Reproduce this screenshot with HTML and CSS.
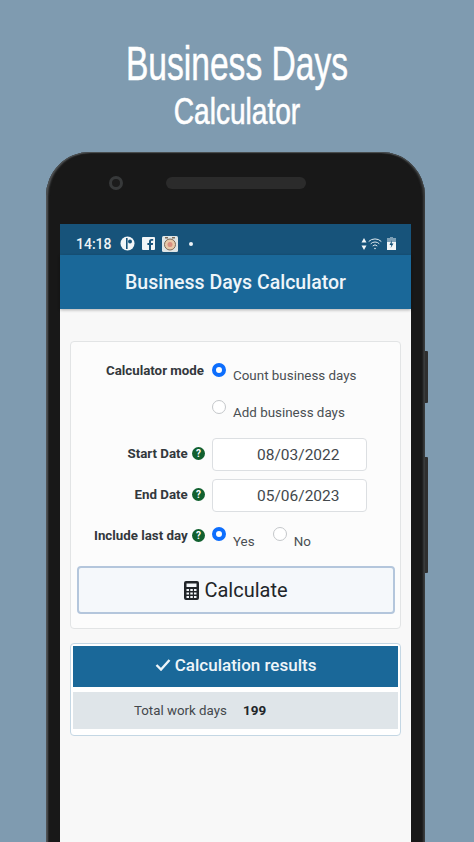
FILE: index.html
```html
<!DOCTYPE html>
<html lang="en">
<head>
<meta charset="utf-8">
<title>Business Days Calculator</title>
<link rel="stylesheet" href="styles.css">
</head>
<body>
<header class="promo">
  <h1 class="promo-title">Business Days</h1>
  <p class="promo-sub">Calculator</p>
</header>
<div class="phone">
  <span class="side-btn side-power"></span>
  <span class="side-btn side-volume"></span>
  <div class="bezel">
    <span class="camera"></span>
    <span class="speaker"></span>
  </div>
  <div class="screen">
    <div class="statusbar">
      <span class="clock">14:18</span>
      <svg class="st-icon" width="15" height="15" viewBox="0 0 15 15"><circle cx="7.5" cy="7.5" r="7" fill="#f2f6f8"/><rect x="6" y="2" width="1.6" height="11" fill="#17537a"/><circle cx="10" cy="5.5" r="2" fill="#17537a"/></svg>
      <svg class="st-icon" width="13" height="13" viewBox="0 0 13 13"><rect width="13" height="13" rx="1" fill="#f2f6f8"/><path d="M9 13V8h1.8l.3-2H9V4.8c0-.6.3-1 1-1h1.200V2h-1.700C7.900 2 7 3 7 4.600V6H5.400v2H7v5z" fill="#17537a"/></svg>
      <svg class="st-icon" width="16" height="16" viewBox="0 0 16 16"><rect width="16" height="16" rx="1.500" fill="#dfe6e6"/><circle cx="8" cy="8.500" r="5.500" fill="#e8c9a8" stroke="#7d6a58" stroke-width="1"/><circle cx="8" cy="8.500" r="2.500" fill="#d98f80"/><rect x="3" y="1" width="3" height="1.500" fill="#7d6a58"/><rect x="10" y="1" width="3" height="1.500" fill="#7d6a58"/></svg>
      <span class="st-dot"></span>
      <span class="st-right">
        <svg width="6" height="12" viewBox="0 0 6 12"><path d="M3 0l2.500 4.500h-5zM3 12L.5 7.500h5z" fill="#f2f6f8"/></svg>
        <svg width="14" height="12" viewBox="0 0 14 12" fill="none" stroke="#dfe9ef" stroke-width="1"><path d="M.7 3.500a9 9 0 0 1 12.600 0M2.700 5.800a6 6 0 0 1 8.600 0M4.700 8a3.200 3.200 0 0 1 4.600 0"/><circle cx="7" cy="10.500" r=".8" fill="#dfe9ef" stroke="none"/></svg>
        <svg class="st-batt" width="9" height="13" viewBox="0 0 9 13"><path d="M3 0h3v1.500h3V13H0V1.500h3z" fill="#f2f6f8"/><path d="M3 0h3v1.500h3V5H0V1.500h3z" fill="#7d9fb6"/><path d="M5 3L2.500 8h1.800L3.700 11 6.500 6.500H4.700z" fill="#17537a"/></svg>
      </span>
    </div>
    <div class="appbar">Business Days Calculator</div>
    <main class="content">
      <form class="card form-card">
        <div class="row row-mode">
          <span class="label">Calculator mode</span>
          <div class="radio-stack">
            <label class="radio-line"><span class="radio on"></span><span class="radio-text">Count business days</span></label>
            <label class="radio-line"><span class="radio"></span><span class="radio-text">Add business days</span></label>
          </div>
        </div>
        <div class="row row-date">
          <span class="label">Start Date <span class="help">?</span></span>
          <div class="date-input">08/03/2022</div>
        </div>
        <div class="row row-date">
          <span class="label">End Date <span class="help">?</span></span>
          <div class="date-input">05/06/2023</div>
        </div>
        <div class="row row-last">
          <span class="label">Include last day <span class="help">?</span></span>
          <div class="radio-inline">
            <label class="radio-line"><span class="radio on"></span><span class="radio-text">Yes</span></label>
            <label class="radio-line"><span class="radio"></span><span class="radio-text">No</span></label>
          </div>
        </div>
        <button class="calc-btn" type="button">
          <svg width="15" height="19" viewBox="0 0 15 19"><path fill-rule="evenodd" d="M2 0h11a2 2 0 0 1 2 2v15a2 2 0 0 1-2 2H2a2 2 0 0 1-2-2V2a2 2 0 0 1 2-2zM2.500 2.500v3.500h10V2.500zM2.500 8v2h2.500V8zM6.300 8v2h2.500V8zM10 8v2h2.500V8zM2.500 11.500v2h2.500v-2zM6.300 11.500v2h2.500v-2zM10 11.500v2h2.500v-2zM2.500 15v2h2.500v-2zM6.300 15v2h2.500v-2zM10 15v2h2.500v-2z" fill="#212529"/></svg>
          <span>Calculate</span>
        </button>
      </form>
      <section class="card results-card">
        <h2 class="results-head">
          <svg width="16" height="13" viewBox="0 0 16 13"><path d="M1.500 7l4.500 4.500L14.500 2" fill="none" stroke="#eef4f8" stroke-width="2.400"/></svg>
          Calculation results
        </h2>
        <div class="results-row"><span class="res-label">Total work days</span><strong class="res-value">199</strong></div>
      </section>
    </main>
  </div>
</div>
</body>
</html>
```
FILE: styles.css
```css
* { box-sizing: border-box; }
html, body { margin: 0; height: 842px; overflow: hidden; }
body {
  background: #7f9bb0;
  font-family: Roboto, "Liberation Sans", sans-serif;
  color: #212529;
}
.promo { height: 152px; padding-top: 38px; text-align: center; color: #fff; }
.promo-title {
  margin: 0;
  font: 400 48px/52px "Liberation Sans Narrow", "Liberation Sans", sans-serif;
  transform: scaleX(.7);
  -webkit-text-stroke: .5px #fff;
}
.promo-sub {
  margin: 1px 0 0;
  font: 400 36px/42px "Liberation Sans Narrow", "Liberation Sans", sans-serif;
  transform: scaleX(.78);
  -webkit-text-stroke: .6px #fff;
}
.phone {
  position: relative;
  width: 379px;
  height: 720px;
  margin-left: 46px;
  background: #181818;
  border-radius: 44px 44px 0 0;
  box-shadow: inset 0 1px 1px #4c5052, inset 2px 0 2px #55585a, inset -2px 0 2px #3a3c3d;
  padding: 0 14px;
}
.side-btn {
  position: absolute;
  right: -3px;
  width: 3px;
  background: #2f2f2f;
  border-radius: 0 1px 1px 0;
}
.side-power { top: 199px; height: 52px; }
.side-volume { top: 305px; height: 116px; }
.bezel { position: relative; height: 72px; }
.camera {
  position: absolute;
  left: 49px;
  top: 24px;
  width: 14px;
  height: 14px;
  border-radius: 50%;
  background: #1c1c1c;
  border: 3px solid #37393a;
}
.speaker {
  position: absolute;
  left: 106px;
  top: 25px;
  width: 140px;
  height: 12px;
  border-radius: 6px;
  background: #2b2b2b;
}
.screen { width: 351px; height: 618px; background: #f8f8f8; }
.statusbar {
  height: 31px;
  background: #17537a;
  display: flex;
  align-items: center;
  padding: 8px 15px 0 16px;
  color: #eef3f6;
}
.clock { font-size: 14px; font-weight: 500; margin-right: 9px; }
.st-icon { margin-right: 7px; }
.st-icon:first-of-type { margin-left: -1px; }
.st-dot { width: 4px; height: 4px; border-radius: 50%; background: #eef3f6; margin-left: 4px; }
.st-right { margin-left: auto; display: flex; align-items: center; gap: 1px; }
.st-batt { margin-left: 4px; }
.appbar {
  height: 54px;
  background: #1a6899;
  color: #eef5f9;
  font-size: 19.500px;
  font-weight: 500;
  line-height: 55px;
  text-align: center;
  box-shadow: 0 1px 3px rgba(0,0,0,.3);
  position: relative;
}
.content { padding: 32px 10px 0; }
.card {
  background: #fcfcfc;
  border: 1px solid #e2e4e5;
  border-radius: 4px;
}
.form-card { height: 288px; padding-top: 18px; }
.row { display: grid; grid-template-columns: 134px 1fr; column-gap: 7px; }
.label {
  font-size: 13.300px;
  font-weight: 700;
  color: #33383c;
  text-align: right;
  line-height: 20px;
}
.radio-stack { display: flex; flex-direction: column; gap: 13px; }
.radio-line { display: flex; align-items: flex-start; font-size: 13.400px; color: #4a4f53; }
.radio {
  width: 14px;
  height: 14px;
  margin-top: 3px;
  border-radius: 50%;
  background: #fff;
  border: 1px solid #c4c7ca;
  flex: none;
}
.radio.on { border: 4px solid #0d6efd; }
.radio-text { margin: 8px 0 0 7px; line-height: 16px; }
.row-mode { height: 78px; }
.row-mode .label { padding-top: 1px; padding-right: 1px; }
.row-date { height: 32px; margin-bottom: 9px; align-items: center; }
.row-date .label { padding-bottom: 1px; }
.date-input {
  width: 155px;
  height: 33px;
  background: #fff;
  border: 1px solid #dcdfe2;
  border-radius: 4px;
  font-size: 15.500px;
  color: #43484c;
  line-height: 33px;
  padding-left: 44px;
}
.help {
  display: inline-block;
  width: 13px;
  height: 13px;
  margin-left: 1px;
  border-radius: 50%;
  background: #11602f;
  color: #fff;
  font-size: 10px;
  font-weight: 700;
  line-height: 13px;
  text-align: center;
  vertical-align: 1px;
}
.row-last { margin-top: 3px; height: 46px; }
.row-last .label { padding-top: 6px; }
.row-last .radio-text { margin-top: 10px; }
.radio-inline { display: flex; gap: 18px; padding-top: 4px; }
.calc-btn {
  display: flex;
  align-items: center;
  justify-content: center;
  gap: 5px;
  width: 318px;
  height: 48px;
  margin-left: 6px;
  background: #f5f8fb;
  border: 2px solid #b4c6dc;
  border-radius: 4px;
  font: 400 20px Roboto, sans-serif;
  color: #212529;
}
.results-card {
  height: 93px;
  margin-top: 14px;
  padding: 2px;
  border-color: #c4d7e4;
  background: #fff;
}
.results-head {
  margin: 0;
  height: 41px;
  background: #1a6899;
  color: #eef5f9;
  font-size: 17px;
  font-weight: 500;
  line-height: 39px;
  text-align: center;
}
.results-row {
  height: 37px;
  margin-top: 5px;
  background: #dfe5e9;
  font-size: 13.300px;
  line-height: 37px;
  color: #43484c;
  padding-left: 61px;
  display: flex;
  gap: 16px;
}
.res-value { color: #212529; font-weight: 700; font-size: 13.500px; }
```
